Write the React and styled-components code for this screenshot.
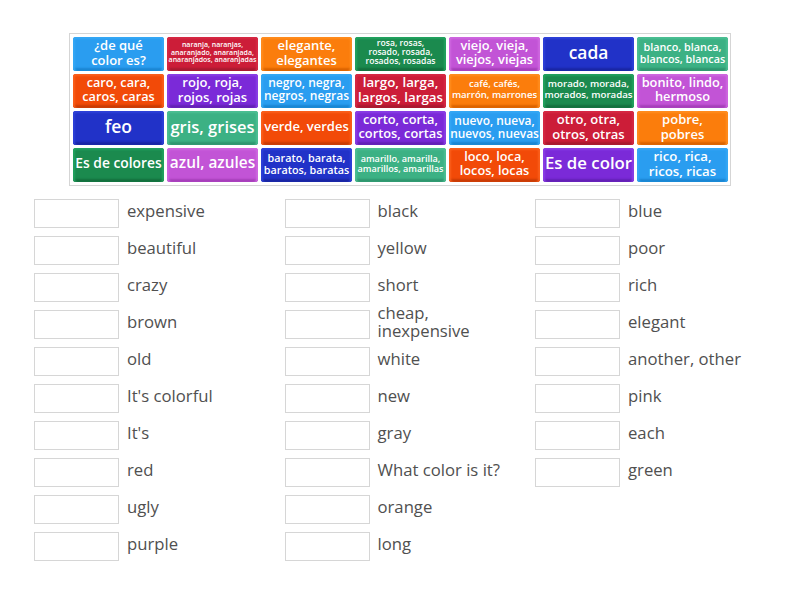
import React from "react";
import styled, { createGlobalStyle } from "styled-components";

const GlobalStyle = createGlobalStyle`
  html, body {
    margin: 0;
    padding: 0;
    background: #fff;
    font-family: "Open Sans", "Liberation Sans", sans-serif;
  }
`;

const palette = {
  blue: ["#2a9df0", "#35a8f5", "#1a86d2"],
  crimson: ["#cc1d38", "#d62a44", "#a81a30"],
  orange: ["#fb7d0c", "#ff8d1f", "#dc6400"],
  green: ["#1b8a4e", "#22a35f", "#14703e"],
  magenta: ["#c254d6", "#cf68e0", "#a63fba"],
  navy: ["#2132c8", "#2f42d8", "#1a26a4"],
  teal: ["#3cb184", "#4cbf93", "#2f966e"],
  red: ["#f24a08", "#fa5f1c", "#c93c06"],
  purple: ["#7b2ad8", "#8b3fe6", "#6420b6"],
};

const tiles = [
  ["¿de qué\ncolor es?", "blue", 13],
  ["naranja, naranjas,\nanaranjado, anaranjada,\nanaranjados, anaranjadas", "crimson", 7],
  ["elegante,\nelegantes", "orange", 13],
  ["rosa, rosas,\nrosado, rosada,\nrosados, rosadas", "green", 8.6],
  ["viejo, vieja,\nviejos, viejas", "magenta", 12.8],
  ["cada", "navy", 17.4],
  ["blanco, blanca,\nblancos, blancas", "teal", 10.8],
  ["caro, cara,\ncaros, caras", "red", 12.7],
  ["rojo, roja,\nrojos, rojas", "purple", 13],
  ["negro, negra,\nnegros, negras", "blue", 12],
  ["largo, larga,\nlargos, largas", "crimson", 13.3],
  ["café, cafés,\nmarrón, marrones", "orange", 9.6],
  ["morado, morada,\nmorados, moradas", "green", 9.7],
  ["bonito, lindo,\nhermoso", "magenta", 12.8],
  ["feo", "navy", 17.5],
  ["gris, grises", "teal", 16.5],
  ["verde, verdes", "red", 13],
  ["corto, corta,\ncortos, cortas", "purple", 12.8],
  ["nuevo, nueva,\nnuevos, nuevas", "blue", 11.9],
  ["otro, otra,\notros, otras", "crimson", 13],
  ["pobre,\npobres", "orange", 13],
  ["Es de colores", "green", 13.8],
  ["azul, azules", "magenta", 15.4],
  ["barato, barata,\nbaratos, baratas", "navy", 10.8],
  ["amarillo, amarilla,\namarillos, amarillas", "teal", 9.1],
  ["loco, loca,\nlocos, locas", "red", 12.7],
  ["Es de color", "purple", 16.8],
  ["rico, rica,\nricos, ricas", "blue", 13.2],
];

const columns = [
  ["expensive", "beautiful", "crazy", "brown", "old", "It's colorful", "It's", "red", "ugly", "purple"],
  ["black", "yellow", "short", "cheap, inexpensive", "white", "new", "gray", "What color is it?", "orange", "long"],
  ["blue", "poor", "rich", "elegant", "another, other", "pink", "each", "green"],
];

const Page = styled.div`
  width: 800px;
  height: 600px;
  padding-top: 33px;
  box-sizing: border-box;
  display: flex;
  flex-direction: column;
  overflow: hidden;
`;

const TilePanel = styled.div`
  width: 662px;
  height: 153px;
  margin-left: 69px;
  box-sizing: border-box;
  border: 1px solid #d5d5d5;
  padding: 3px;
  display: grid;
  grid-template-columns: repeat(7, 91px);
  grid-template-rows: repeat(4, 34px);
  gap: 3px;
`;

const Tile = styled.div`
  display: flex;
  align-items: center;
  justify-content: center;
  text-align: center;
  white-space: pre;
  border-radius: 3px;
  padding-bottom: 3px;
  box-sizing: border-box;
  color: #fff;
  font-weight: 600;
  font-size: ${(p) => p.$size}px;
  line-height: 1.08;
  background: ${(p) => palette[p.$color][0]};
  box-shadow: inset 0 3px 2px -1px ${(p) => palette[p.$color][1]},
    inset 3px 0 2px -1px ${(p) => palette[p.$color][1]},
    inset -3px 0 2px -1px ${(p) => palette[p.$color][1]},
    inset 0 -4px 2px -1px ${(p) => palette[p.$color][2]};
`;

const Answers = styled.div`
  margin: 13px 0 0 34px;
  display: grid;
  grid-template-columns: repeat(3, 250.5px);
`;

const AnswerColumn = styled.div`
  display: flex;
  flex-direction: column;
`;

const AnswerRow = styled.div`
  height: 37px;
  display: flex;
  align-items: flex-start;
`;

const Slot = styled.div`
  width: 85px;
  height: 29px;
  box-sizing: border-box;
  border: 1px solid #d6d6d6;
  background: #fff;
  flex: none;
`;

const Label = styled.div`
  margin-left: 8px;
  width: 112px;
  height: 23px;
  display: flex;
  align-items: center;
  font-size: 16.7px;
  line-height: 18px;
  color: #505050;
  white-space: ${(p) => (p.$wrap ? "normal" : "nowrap")};
`;

export default function App() {
  return (
    <Page>
      <GlobalStyle />
      <TilePanel>
        {tiles.map(([text, color, size]) => (
          <Tile key={text} $color={color} $size={size}>
            {text}
          </Tile>
        ))}
      </TilePanel>
      <Answers>
        {columns.map((col, i) => (
          <AnswerColumn key={i}>
            {col.map((word) => (
              <AnswerRow key={word}>
                <Slot />
                <Label $wrap={word.startsWith("cheap")}>{word}</Label>
              </AnswerRow>
            ))}
          </AnswerColumn>
        ))}
      </Answers>
    </Page>
  );
}
